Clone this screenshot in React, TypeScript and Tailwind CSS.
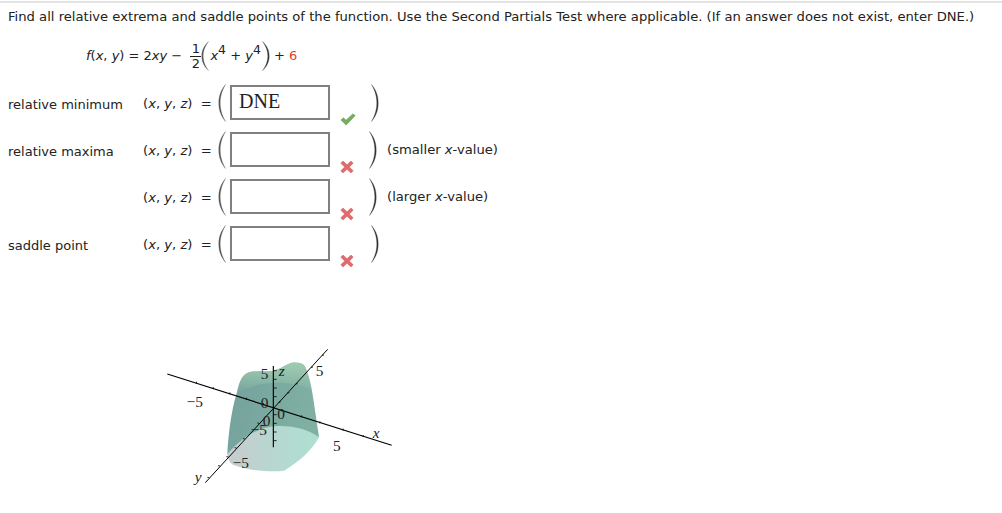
const Paren = ({ side, tall = 38 }: { side: "left" | "right"; tall?: number }) => (
  <svg width="9" height={tall} viewBox="0 0 9 38" preserveAspectRatio="none" className="shrink-0">
    {side === "left" ? (
      <path d="M7.5 0.5 C1.5 8 0.8 14 0.8 19 C0.8 24 1.5 30 7.5 37.5 C3.2 30 2.2 24 2.2 19 C2.2 14 3.2 8 7.5 0.5 Z" fill="#555" stroke="#555" strokeWidth="0.3" />
    ) : (
      <path d="M1.5 0.5 C7.5 8 8.2 14 8.2 19 C8.2 24 7.5 30 1.5 37.5 C5.8 30 6.8 24 6.8 19 C6.8 14 5.8 8 1.5 0.5 Z" fill="#333" stroke="#333" strokeWidth="0.3" />
    )}
  </svg>
);

const Check = () => (
  <svg width="16" height="13" viewBox="0 0 16 13" className="absolute left-[340px] top-[34px]">
    <path d="M1 7 L3.5 4.8 L6 7.3 L12.8 1 L15.2 2.6 L6.2 12 Z" fill="#76ad5e" stroke="#5f9a4c" strokeWidth="0.6" />
  </svg>
);

const Cross = () => (
  <svg width="14" height="14" viewBox="0 0 14 14" className="absolute left-[340px] top-[34px]">
    <path d="M3 1 L7 4.8 L11 1 L13.2 3.2 L9.3 7 L13.2 10.8 L11 13 L7 9.2 L3 13 L0.8 10.8 L4.7 7 L0.8 3.2 Z" fill="#e26a6a" stroke="#d35a5a" strokeWidth="0.5" />
  </svg>
);

const Row = ({
  label,
  value,
  mark,
  note,
  closeAt,
}: {
  label?: string;
  value?: string;
  mark: "check" | "cross";
  note?: React.ReactNode;
  closeAt: string;
}) => (
  <div className="relative flex h-[47px] items-center">
    <div className="w-[143px] shrink-0 pl-2 pt-1 text-[13px]">{label}</div>
    <div className="w-[75px] shrink-0 whitespace-pre pt-[3px]">
      (<i>x</i>, <i>y</i>, <i>z</i>){"  "}=
    </div>
    <Paren side="left" />
    <div className="ml-[3px] flex h-[35px] w-[100px] shrink-0 items-center border-2 border-[#808080] bg-white pb-[3px] pl-[7px] font-['Liberation_Serif',serif] text-[20px]">
      {value}
    </div>
    {mark === "check" ? <Check /> : <Cross />}
    <div className={closeAt}>
      <Paren side="right" />
    </div>
    {note && <div className="ml-[10px]">{note}</div>}
  </div>
);

const Plot = () => (
  <svg width="280" height="160" viewBox="0 0 840 480" className="ml-[130px] mt-[73px] block">
    <defs>
      <linearGradient id="body" x1="0" y1="0" x2="1" y2="0.25">
        <stop offset="0" stopColor="#74a09c" />
        <stop offset="0.45" stopColor="#79a8a0" />
        <stop offset="1" stopColor="#80b0a2" />
      </linearGradient>
      <linearGradient id="top" x1="0" y1="0" x2="0" y2="1">
        <stop offset="0" stopColor="#a0cdb0" />
        <stop offset="1" stopColor="#a0cdb0" stopOpacity="0" />
      </linearGradient>
      <linearGradient id="cap" x1="0" y1="0" x2="1" y2="0">
        <stop offset="0" stopColor="#c8ccce" />
        <stop offset="0.55" stopColor="#b6d8d0" />
        <stop offset="1" stopColor="#aee0d2" />
      </linearGradient>
    </defs>
    <path
      d="M292 342 C294 290 304 210 320 160 C328 125 336 100 362 95 C390 92 410 95 430 92 C455 88 475 66 497 68 C515 68 525 72 530 92 C545 130 552 190 558 230 C562 260 566 280 567 292 L440 300 L292 342 Z"
      fill="url(#body)"
    />
    <path
      d="M320 160 C328 125 336 100 362 95 C390 92 410 95 430 92 C455 88 475 66 497 68 C515 68 525 72 530 92 C537 110 542 130 546 150 C480 120 390 120 320 160 Z"
      fill="url(#top)"
    />
    <path
      d="M292 342 C320 310 370 262 440 258 C490 256 540 270 567 292 C550 325 510 365 462 392 C420 398 350 390 310 375 C298 368 292 355 292 342 Z"
      fill="url(#cap)"
    />
    <g stroke="#000" fill="none">
      <path d="M112 102 L785 316" strokeWidth="3.4" />
      <path d="M593 28 L226 428" strokeWidth="3" />
      <path d="M430 78 L430 322" strokeWidth="3.4" />
      <path
        d="M200 125 l-1 6 M250 141 l-1 6 M300 157 l-1 6 M350 173 l-1 6 M400 189 l-1 6 M455 208 l-1 6 M515 226 l-1 6 M570 244 l-1 6 M640 266 l-1 6 M700 285 l-1 6
           M576 46 l6 -1 M543 82 l6 -1 M497 132 l6 -1 M472 159 l6 -1 M446 187 l6 -1 M388 250 l-6 -1 M345 297 l-6 -1 M320 324 l-6 -1 M295 351 l-6 -1 M270 378 l-6 -1 M238 413 l-6 -1
           M430 92 h10 M430 118 h10 M430 144 h10 M430 170 h10 M430 224 h10 M430 250 h10 M430 276 h10 M430 302 h10"
        strokeWidth="2.4"
      />
    </g>
    <g className="font-['Liberation_Serif',serif]" fontSize="46" fill="#222">
      <text x="392" y="116">5</text>
      <text x="446" y="108" fontStyle="italic">z</text>
      <text x="557" y="107">5</text>
      <text x="170" y="200">−5</text>
      <text x="392" y="203">0</text>
      <text x="442" y="237">0</text>
      <text x="398" y="258">0</text>
      <text x="362" y="285">−5</text>
      <text x="609" y="332">5</text>
      <text x="728" y="294" fontStyle="italic">x</text>
      <text x="308" y="384">−5</text>
      <text x="194" y="426" fontStyle="italic">y</text>
    </g>
  </svg>
);

export default function App() {
  return (
    <div className="h-[513px] w-[1002px] overflow-hidden bg-white font-['DejaVu_Sans',sans-serif] text-[13.15px] leading-[16px] text-[#222]">
      <div className="mt-px h-[2px] bg-[#e4e4e4]" />
      <p className="ml-2 mt-[6px] whitespace-nowrap">
        Find all relative extrema and saddle points of the function. Use the Second Partials Test where applicable. (If an answer does not exist, enter DNE.)
      </p>
      <div className="ml-[86px] mt-[12px] flex h-[38px] items-center whitespace-pre text-[13px]">
        <span>
          <i>f</i>(<i>x</i>, <i>y</i>) = 2<i>xy</i> −{" "}
        </span>
        <span className="ml-[4px] flex w-[11px] flex-col items-center leading-[14px]">
          <span className="w-full border-b border-[#222] text-center">1</span>
          <span>2</span>
        </span>
        <Paren side="left" tall={30} />
        <span>
          <i>x</i>
          <sup className="text-[12.5px]">4</sup> + <i>y</i>
          <sup className="text-[12.5px]">4</sup>
        </span>
        <Paren side="right" tall={30} />
        <span>
          {" "}+ <span className="text-[#e0402a]">6</span>
        </span>
      </div>
      <div className="mt-[4px]">
        <Row label="relative minimum" value="DNE" mark="check" closeAt="ml-[40px]" />
        <Row label="relative maxima" mark="cross" closeAt="ml-[38px]" note={<>(smaller <i>x</i>-value)</>} />
        <Row mark="cross" closeAt="ml-[38px]" note={<>(larger <i>x</i>-value)</>} />
        <Row label="saddle point" mark="cross" closeAt="ml-[40px]" />
      </div>
      <Plot />
    </div>
  );
}
